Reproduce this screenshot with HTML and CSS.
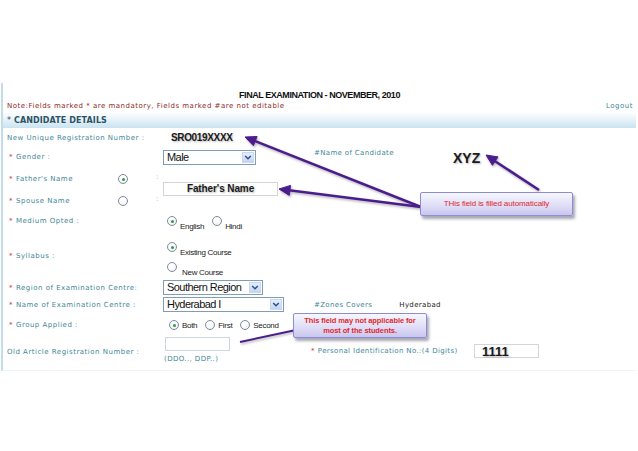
FILE: index.html
```html
<!DOCTYPE html>
<html>
<head>
<meta charset="utf-8">
<link rel="stylesheet" href="styles.css">
</head>
<body>
<div class="page">
  <div class="panel">
    <div class="title">FINAL EXAMINATION - NOVEMBER, 2010</div>
    <div class="noterow">
      <span class="note">Note:Fields marked * are mandatory, Fields marked #are not editable</span>
      <span class="logout">Logout</span>
    </div>
    <div class="bar"><span class="star">*</span> CANDIDATE DETAILS</div>

    <div class="form">
      <!-- row 1 -->
      <div class="lbl r1 span3">New Unique Registration Number :</div>
      <div class="val r1"><span class="shadowtext sro">SRO019XXXX</span></div>

      <!-- row 2 -->
      <div class="lbl r2 span3"><span class="req">*</span> Gender :</div>
      <div class="val r2">
        <div class="select w92"><span class="seltext">Male</span><span class="selbtn"><svg viewBox="0 0 10 8" width="8" height="7"><path d="M1.5 2 L5 5.5 L8.5 2" fill="none" stroke="#2c4f8f" stroke-width="1.8"/></svg></span></div>
      </div>
      <div class="rlbl r2 up4">#Name of Candidate</div>
      <div class="rval r2"><span class="shadowtext xyz">XYZ</span></div>

      <!-- row 3/4 -->
      <div class="lbl r3"><span class="req">*</span> Father's Name</div>
      <div class="radiocell r3"><span class="radio on"></span></div>
      <div class="colon r3">:</div>
      <div class="val r34"><div class="namebox"><span class="shadowtext">Father's Name</span></div></div>

      <div class="lbl r4"><span class="req">*</span> Spouse Name</div>
      <div class="radiocell r4"><span class="radio"></span></div>
      <div class="colon r4">:</div>

      <!-- row 5 -->
      <div class="lbl r5 span3"><span class="req">*</span> Medium Opted :</div>
      <div class="val r5 opts">
        <span class="radio on"></span><span class="opt low">English</span>
        <span class="radio gap"></span><span class="opt low">Hindi</span>
      </div>

      <!-- row 6 -->
      <div class="lbl r6 span3"><span class="req">*</span> Syllabus :</div>
      <div class="val r6 stack">
        <div class="opts"><span class="radio on"></span><span class="opt low">Existing Course</span></div>
        <div class="opts"><span class="radio"></span><span class="opt low ind">New Course</span></div>
      </div>

      <!-- row 7 -->
      <div class="lbl r7 span3"><span class="req">*</span> Region of Examination Centre:</div>
      <div class="val r7">
        <div class="select w99"><span class="seltext">Southern Region</span><span class="selbtn"><svg viewBox="0 0 10 8" width="8" height="7"><path d="M1.5 2 L5 5.5 L8.5 2" fill="none" stroke="#2c4f8f" stroke-width="1.8"/></svg></span></div>
      </div>

      <!-- row 8 -->
      <div class="lbl r8 span3"><span class="req">*</span> Name of Examination Centre :</div>
      <div class="val r8">
        <div class="select w120"><span class="seltext">Hyderabad I</span><span class="selbtn"><svg viewBox="0 0 10 8" width="8" height="7"><path d="M1.5 2 L5 5.5 L8.5 2" fill="none" stroke="#2c4f8f" stroke-width="1.8"/></svg></span></div>
      </div>
      <div class="rlbl r8 zones"><span>#Zones Covers</span><span class="dark">Hyderabad</span></div>

      <!-- row 9 -->
      <div class="lbl r9 span3"><span class="req">*</span> Group Applied :</div>
      <div class="val r9 opts grp">
        <span class="radio on"></span><span class="opt">Both</span>
        <span class="radio"></span><span class="opt">First</span>
        <span class="radio"></span><span class="opt">Second</span>
      </div>

      <!-- row 10 -->
      <div class="lbl r10 span3 mid">Old Article Registration Number :</div>
      <div class="val r10 stack2">
        <div class="smallbox"></div>
        <div class="hint">(DDO.., DDP..)</div>
      </div>
      <div class="rlbl r10 mid pin"><span class="req">*</span> Personal Identification No.:(4 Digits)</div>
      <div class="rval r10 mid"><div class="pinbox"><span class="shadowtext pinval">1111</span></div></div>
    </div>
  </div>

  <svg class="arrows" width="638" height="451" viewBox="0 0 638 451">
    <defs>
      <filter id="sh" x="-10%" y="-10%" width="120%" height="130%">
        <feDropShadow dx="1" dy="1.5" stdDeviation="1" flood-color="#000" flood-opacity="0.3"/>
      </filter>
    </defs>
    <g fill="#4b1e8c" stroke="#4b1e8c" filter="url(#sh)">
      <line x1="421" y1="207" x2="254" y2="140.6" stroke-width="2.6"/>
      <polygon points="245,137 253.4,145.7 257.1,136.5" stroke-width="1"/>
      <line x1="421" y1="207" x2="289" y2="190.3" stroke-width="2.6"/>
      <polygon points="279,189 289.3,195.4 290.5,185.4" stroke-width="1"/>
      <line x1="539" y1="190" x2="494" y2="160.5" stroke-width="2.6"/>
      <polygon points="486,155 492.4,165.3 498,156.9" stroke-width="1"/>
      <line x1="296" y1="330" x2="240" y2="342" stroke-width="2"/>
    </g>
  </svg>

  <div class="callout c1">THis field is filled automatically</div>
  <div class="callout c2">This field may not applicable for<br>most of the students.</div>
</div>
</body>
</html>
```

FILE: styles.css
```css
html, body {
  margin: 0;
  padding: 0;
  background: #fff;
}
.page {
  position: relative;
  width: 638px;
  height: 451px;
  overflow: hidden;
  font-family: "DejaVu Sans", Verdana, sans-serif;
}
.panel {
  margin-top: 83px;
  margin-left: 1px;
  width: 635px;
  height: 288px;
  border-left: 2px solid #c2dde9;
  border-bottom: 1px solid #edf3f6;
  box-sizing: border-box;
  padding-top: 6px;
}
.title {
  font-family: "Liberation Sans", Arial, sans-serif;
  font-weight: bold;
  font-size: 9px;
  letter-spacing: -0.45px;
  line-height: 12px;
  height: 12px;
  text-align: center;
  color: #111;
}
.noterow {
  display: flex;
  justify-content: space-between;
  align-items: center;
  height: 10px;
  padding-left: 4px;
  padding-right: 3px;
}
.note {
  font-size: 7px;
  color: #8e2b2b;
  letter-spacing: 0.5px;
}
.logout {
  font-size: 7px;
  color: #3f8798;
  letter-spacing: 0.5px;
}
.bar {
  margin-top: 2px;
  height: 15px;
  line-height: 15px;
  padding-left: 4px;
  font-size: 8px;
  font-weight: bold;
  color: #2c5364;
  letter-spacing: 0.1px;
  background: linear-gradient(to bottom, #fbfdfe 0%, #e6f2f9 45%, #c9e3f1 100%);
}
.bar .star {
  color: #2c5364;
  font-weight: normal;
}

.form {
  display: grid;
  grid-template-columns: 110px 36px 10px 148px 140px 1fr;
  grid-template-rows: 19px 20px 24px 19px 22px 47px 17px 17px 24px 35px;
  padding-left: 4px;
}
.lbl, .rlbl {
  font-size: 7px;
  color: #3f8798;
  letter-spacing: 0.5px;
  display: flex;
  align-items: center;
  white-space: nowrap;
}
.lbl { grid-column: 1; }
.lbl.span3 { grid-column: 1 / span 3; }
.lbl .req, .rlbl .req { color: #c43a3a; margin-right: 3px; }
.r1 { grid-row: 1; }
.r2 { grid-row: 2; }
.r3 { grid-row: 3; }
.r4 { grid-row: 4; }
.r34 { grid-row: 3 / span 2; }
.r5 { grid-row: 5; }
.r6 { grid-row: 6; }
.r7 { grid-row: 7; }
.r8 { grid-row: 8; }
.r9 { grid-row: 9; }
.r10 { grid-row: 10; }
.lbl:not(.r1) { padding-left: 2px; }
.lbl.r10 { padding-left: 0; }

.val {
  grid-column: 4;
  display: flex;
  align-items: center;
}
.rlbl { grid-column: 5; padding-left: 3px; letter-spacing: 0.35px; }
.rval { grid-column: 6; display: flex; align-items: center; }
.up4 { align-items: flex-start; padding-top: 2px; }

.radiocell {
  grid-column: 2;
  display: flex;
  align-items: center;
  padding-left: 1px;
}
.colon {
  grid-column: 3;
  font-size: 7px;
  color: #8aa;
  display: flex;
  align-items: flex-start;
  padding-left: 3px;
  padding-top: 6px;
}
.colon.r4 { padding-top: 4px; }

.shadowtext {
  font-family: "Liberation Sans", Arial, sans-serif;
  font-weight: bold;
  color: #1a1a1a;
  text-shadow: 1px 1px 2px rgba(0,0,0,0.28);
}
.sro {
  font-size: 10px;
  letter-spacing: -0.35px;
  margin-left: 8px;
}
.xyz {
  font-size: 14px;
  margin-left: 2px;
  margin-top: 1px;
}

.select {
  height: 15px;
  box-sizing: border-box;
  border: 1px solid #7f9db9;
  background: #fff;
  display: flex;
  align-items: center;
  justify-content: space-between;
  padding-left: 3px;
  padding-right: 1px;
}
.w92 { width: 93px; }
.w99 { width: 100px; }
.w120 { width: 121px; }
.seltext {
  font-family: "Liberation Sans", Arial, sans-serif;
  font-size: 11px;
  letter-spacing: -0.55px;
  color: #111;
  line-height: 13px;
}
.selbtn {
  width: 12px;
  height: 11px;
  background: linear-gradient(to bottom, #e4edfb, #c3d5f3);
  border: 1px solid #c9d8f0;
  box-sizing: border-box;
  display: flex;
  align-items: center;
  justify-content: center;
}

.namebox {
  width: 115px;
  height: 14px;
  box-sizing: border-box;
  border: 1px solid #d4d4d4;
  background: #fff;
  display: flex;
  align-items: center;
  justify-content: center;
  font-size: 10px;
  letter-spacing: -0.1px;
}

.radio {
  display: inline-block;
  width: 10px;
  height: 10px;
  box-sizing: border-box;
  border-radius: 50%;
  border: 1px solid #7c8c9c;
  background: radial-gradient(circle at 40% 35%, #fff 30%, #e6e9ee 100%);
  position: relative;
  flex: none;
}
.radio.on::after {
  content: "";
  position: absolute;
  left: 2.5px;
  top: 2.5px;
  width: 3px;
  height: 3px;
  border-radius: 50%;
  background: #2f9d45;
}
.opts {
  display: flex;
  align-items: center;
}
.opt {
  font-family: "Liberation Sans", Arial, sans-serif;
  font-size: 8px;
  letter-spacing: -0.3px;
  color: #222;
  margin-left: 4px;
}
.opt.low { position: relative; top: 5px; margin-left: 3px; }
.opt.ind { margin-left: 5px; }
.r5.opts { padding-left: 4px; }
.r5 .radio.gap { margin-left: 8px; }
.stack {
  flex-direction: column;
  align-items: flex-start;
  justify-content: flex-start;
  padding-left: 4px;
  padding-top: 10px;
  gap: 10px;
}
.grp { padding-left: 6px; }
.grp .opt { margin-left: 3px; margin-right: 8px; }

.zones { grid-column: 5 / span 2; gap: 27px; }
.dark { color: #222; }

.mid { align-items: flex-start; padding-top: 11px; }
.lbl.mid { padding-top: 11px; }
.stack2 {
  flex-direction: column;
  align-items: flex-start;
  justify-content: flex-start;
  padding-left: 2px;
  padding-top: 0;
}
.smallbox {
  width: 65px;
  height: 14px;
  box-sizing: border-box;
  border: 1px solid #cfd6dc;
  background: #fff;
}
.hint {
  font-size: 7px;
  color: #3f8798;
  letter-spacing: 0.4px;
  margin-top: 4px;
  margin-left: -1px;
}
.pin { padding-top: 10px; padding-left: 0; }
.rval.mid { padding-top: 7px; }
.pinbox {
  margin-left: 23px;
  width: 65px;
  height: 14px;
  box-sizing: border-box;
  border: 1px solid #cfd6dc;
  background: #fff;
  display: flex;
  align-items: center;
  padding-left: 7px;
}
.pinval { font-size: 13px; }

.arrows {
  position: absolute;
  left: 0;
  top: 0;
  pointer-events: none;
}
.callout {
  position: absolute;
  box-sizing: border-box;
  border: 1px solid #8d8cd4;
  border-radius: 2px;
  background: linear-gradient(to bottom, #f7f7ff 0%, #dedcf6 60%, #c9c6ee 100%);
  box-shadow: 2px 3px 3px rgba(60,60,90,0.45);
  color: #e3262b;
  font-family: "Liberation Sans", Arial, sans-serif;
  text-align: center;
}
.c1 {
  left: 420px;
  top: 192px;
  width: 153px;
  height: 24px;
  font-size: 8px;
  line-height: 22px;
  letter-spacing: -0.1px;
}
.c2 {
  left: 293px;
  top: 313px;
  width: 134px;
  height: 25px;
  font-size: 7.5px;
  font-weight: bold;
  line-height: 10px;
  padding-top: 2px;
  letter-spacing: -0.1px;
}
```
